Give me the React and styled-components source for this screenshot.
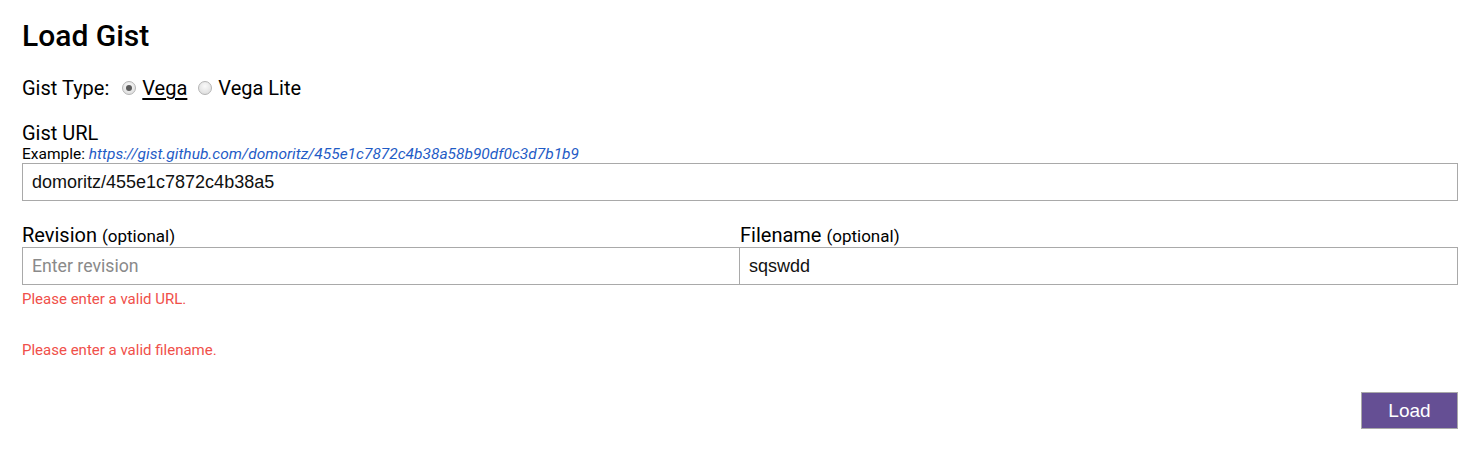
import styled, { createGlobalStyle } from 'styled-components';
import { useState } from 'react';

const GlobalStyle = createGlobalStyle`
  body {
    margin: 0;
    background: #fff;
    font-family: Roboto, "Liberation Sans", sans-serif;
    color: #000;
  }
`;

const Page = styled.div`
  padding: 16px 10px 24px 22px;
`;

const Title = styled.h2`
  margin: 0 0 20px;
  font-size: 30px;
  font-weight: 500;
  line-height: 40px;
`;

const TypeRow = styled.div`
  display: flex;
  align-items: center;
  font-size: 20px;
  line-height: 24px;
  margin-bottom: 21px;
`;

const TypeLabel = styled.span`
  margin-right: 13px;
`;

const RadioLabel = styled.label`
  display: flex;
  align-items: center;
  margin-right: 11px;
  cursor: pointer;
  text-decoration: ${(p) => (p.$active ? 'underline' : 'none')};
  text-underline-offset: 3px;
`;

const Radio = styled.input.attrs({ type: 'radio' })`
  appearance: none;
  box-sizing: border-box;
  width: 14px;
  height: 14px;
  margin: 0 6px 0 0;
  border-radius: 50%;
  border: 1px solid #b4b4b4;
  background: radial-gradient(circle at 50% 35%, #fafafa, #d8d8d8);
  display: grid;
  place-items: center;
  &:checked::after {
    content: '';
    width: 6px;
    height: 6px;
    border-radius: 50%;
    background: #5a5a5a;
  }
`;

const FieldLabel = styled.div`
  font-size: 20px;
  line-height: 24px;
  height: 24px;
`;

const Optional = styled.span`
  font-size: 17px;
  line-height: 1;
`;

const Hint = styled.div`
  font-size: 15.5px;
  line-height: 18px;
`;

const HintLink = styled.a`
  color: #1f5cc6;
  font-style: italic;
  text-decoration: none;
`;

const TextInput = styled.input`
  box-sizing: border-box;
  width: 100%;
  height: 38px;
  margin: 0;
  padding: 0 9px;
  border: 1px solid #a9a9a9;
  border-radius: 0;
  font-family: "Liberation Sans", Arial, sans-serif;
  font-size: 18px;
  color: #111;
  outline: none;
  &::placeholder {
    font-family: Roboto, sans-serif;
    font-size: 17.7px;
    color: #8a8a8a;
  }
`;

const Split = styled.div`
  display: grid;
  grid-template-columns: 1fr 1fr;
  margin-top: 22px;
`;

const Column = styled.div`
  display: flex;
  flex-direction: column;
  & + & ${TextInput} {
    border-left: none;
  }
`;

const Error = styled.div`
  color: #f0504a;
  font-size: 15px;
  line-height: 18px;
  margin-top: ${(p) => p.$gap}px;
`;

const Footer = styled.div`
  display: flex;
  justify-content: flex-end;
  margin-top: 33px;
`;

const LoadButton = styled.button`
  width: 97px;
  height: 37px;
  border: 1px solid #a9a9a9;
  background: #654f94;
  color: #fff;
  font-family: "Liberation Sans", Arial, sans-serif;
  font-size: 19px;
  cursor: pointer;
`;

const App = () => {
  const [type, setType] = useState('vega');
  const [url, setUrl] = useState('domoritz/455e1c7872c4b38a5');
  const [revision, setRevision] = useState('');
  const [filename, setFilename] = useState('sqswdd');

  return (
    <Page>
      <GlobalStyle />
      <Title>Load Gist</Title>
      <TypeRow>
        <TypeLabel>Gist Type:</TypeLabel>
        <RadioLabel $active={type === 'vega'}>
          <Radio name="type" checked={type === 'vega'} onChange={() => setType('vega')} />
          Vega
        </RadioLabel>
        <RadioLabel $active={type === 'vega-lite'}>
          <Radio name="type" checked={type === 'vega-lite'} onChange={() => setType('vega-lite')} />
          Vega Lite
        </RadioLabel>
      </TypeRow>
      <FieldLabel>Gist URL</FieldLabel>
      <Hint>
        Example:{' '}
        <HintLink href="#">https://gist.github.com/domoritz/455e1c7872c4b38a58b90df0c3d7b1b9</HintLink>
      </Hint>
      <TextInput value={url} onChange={(e) => setUrl(e.target.value)} />
      <Split>
        <Column>
          <FieldLabel>
            Revision <Optional>(optional)</Optional>
          </FieldLabel>
          <TextInput
            placeholder="Enter revision"
            value={revision}
            onChange={(e) => setRevision(e.target.value)}
          />
        </Column>
        <Column>
          <FieldLabel>
            Filename <Optional>(optional)</Optional>
          </FieldLabel>
          <TextInput value={filename} onChange={(e) => setFilename(e.target.value)} />
        </Column>
      </Split>
      <Error $gap={5}>Please enter a valid URL.</Error>
      <Error $gap={33}>Please enter a valid filename.</Error>
      <Footer>
        <LoadButton>Load</LoadButton>
      </Footer>
    </Page>
  );
};

export default App;
